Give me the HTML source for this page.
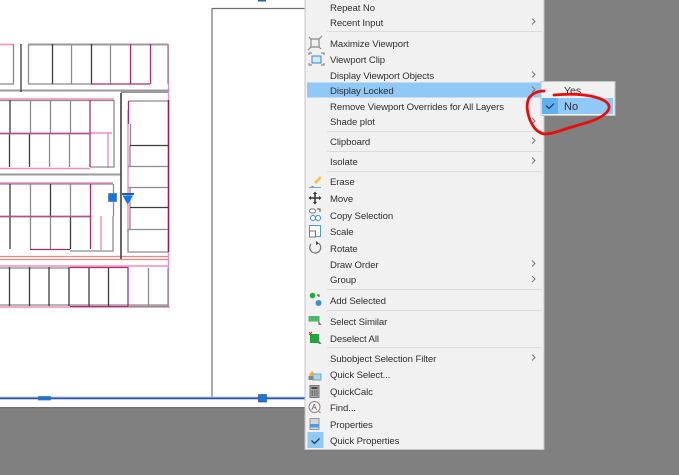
<!DOCTYPE html>
<html>
<head>
<meta charset="utf-8">
<style>
html,body{margin:0;padding:0;width:679px;height:475px;overflow:hidden;background:#808080;font-family:"Liberation Sans",sans-serif}
#c{position:absolute;left:0;top:0;width:679px;height:475px;overflow:hidden}
svg{position:absolute;left:0;top:0}
.t{position:absolute;left:330px;margin-top:1.500px;font-size:9.600px;line-height:12px;color:#303030;white-space:nowrap;letter-spacing:-.1px;filter:blur(.25px)}
</style>
</head>
<body>
<div id="c">
<svg width="679" height="475" viewBox="0 0 679 475" style="filter:blur(.35px)">
<rect x="0" y="0" width="310" height="407" fill="#fff"/>
<rect x="0" y="407" width="310" height="1.500" fill="#6f6f6f"/>
<!-- viewport -->
<path d="M212 398V8.500H306" fill="none" stroke="#707070" stroke-width="1.200"/>
<rect x="258" y="0" width="8" height="1.500" fill="#2a66b0"/>
<rect x="0" y="396.500" width="306" height="3.500" fill="#b9d0ef"/>
<rect x="0" y="397.500" width="306" height="1.500" fill="#2f4f9f"/>
<rect x="38.500" y="396.500" width="12" height="3.500" fill="#0a78e8" stroke="#4a6a9a" stroke-width=".7"/>
<rect x="258.500" y="394.500" width="8" height="7.500" fill="#0a78f0" stroke="#555" stroke-width=".7"/>
<!-- pink -->
<g fill="none" stroke="#f58ac0" stroke-width="1.400">
<path d="M0 44.500H14M0 99H114M0 183H113M90 133H112M0 168.500H90M168.500 44V307M0 307H170M128 110V232M0 266H168M101 216V250M108 133V168"/>
</g>
<g fill="none" stroke="#f4847f" stroke-width="1.200">
<path d="M0 256.500H168M0 259.500H168"/>
</g>
<!-- grey -->
<g fill="none" stroke="#8c8c8c" stroke-width="1.300">
<path d="M0 84H13.500V44M28.500 44V84H52M52 84H91"/>
<path d="M71.500 45V84M110.500 45V84M168 45V84"/>
<path d="M30.500 100V133M50.500 100V133M70.500 100V133M49.500 133V167M69.500 133V167M0 100.500H114V133M114 133V167H90"/>
<path d="M128.500 101H168M130.500 124V145M130 145V166M128 166.500H168"/>
<path d="M0 184H113M30.500 184V216M70.500 184V216M50.500 216V249M30.500 216V249M113.500 184V216M113 216V251H70"/>
<path d="M128 187.500H168M130 187V229M128 229.500H168M128 229V252H168"/>
<path d="M0 268H70M148.500 268V306M168 268V307M0 305H168M128 306.500H168"/>
</g>
<g fill="none" stroke="#9a9a9a" stroke-width="2">
<path d="M28 44.500H168M0 90.500H169M121 92H168M0 174.500H121"/>
</g>
<!-- dark -->
<g fill="none" stroke="#3c3c3c" stroke-width="1.300">
<path d="M21 44V92M52.500 44V84M91.500 44V84M10 100V133M9.500 133V167M29.500 133V167M10 184V216M50.500 184V216M10 216V249M70.500 216V249"/>
<path d="M130 145.500H168M130 207.500H168M9.500 267V306M29.500 267V306M49 267V306M69 267V306M89 267V306M108.500 267V306"/>
</g>
<path d="M121 93V259" fill="none" stroke="#555" stroke-width="1.800"/>
<!-- purple -->
<g fill="none" stroke="#b02a70" stroke-width="1.300">
<path d="M91 84H150M130.500 44V84M150.500 44V84M90 100V133M90 133V167M90.500 184V216M90.500 216V249M128.500 101V124M128 267V306M70 306.500H128M70 267.500H128M30 249.500H70"/>
</g>
<path d="M0 133.500H90M0 216.500H90" fill="none" stroke="#b4508a" stroke-width="1.800"/>
<path d="M168.500 100V252" fill="none" stroke="#9a1560" stroke-width="1.500"/>
<!-- handles -->
<rect x="108.500" y="193.500" width="8" height="8" fill="#0a78e8" stroke="#6b7a90" stroke-width=".8"/>
<rect x="122" y="193" width="12" height="2" fill="#2a5f9f"/>
<path d="M122.500 195.500H133L127.700 204.500Z" fill="#0a78f0"/>
<!-- menu -->
<rect x="305" y="-1" width="239" height="450.500" fill="#f1f1f1" stroke="#c4c4c4" stroke-width="1"/>
<rect x="307" y="82.500" width="236" height="15" fill="#90c8f6"/>
<g stroke="#dcdcdc" stroke-width="1">
<path d="M327 31.500H542M327 131.500H542M327 151.500H542M327 171.500H542M327 289.500H542M327 310.500H542M327 347.500H542"/>
</g>
<g fill="none" stroke="#777" stroke-width="1">
<path d="M532 18.500l3 3l-3 3M532 71.500l3 3l-3 3M532 86.500l3 3l-3 3M532 118l3 3l-3 3M532 137.500l3 3l-3 3M532 157.500l3 3l-3 3M532 260.500l3 3l-3 3M532 276l3 3l-3 3M532 354.500l3 3l-3 3"/>
</g>
<!-- submenu -->
<rect x="541" y="81.500" width="74" height="34" fill="#f1f1f1" stroke="#c4c4c4"/>
<rect x="542" y="98" width="71" height="16" fill="#90c8f6"/>
<rect x="542" y="98" width="16" height="16" fill="#5fb0f0"/>
<path d="M546 105.500l3 3l5-5" fill="none" stroke="#2b3a4d" stroke-width="1.200"/>
<!-- icons -->
<g fill="none" stroke="#8a8a8a" stroke-width="1.200">
<path d="M311 39H319V47H311Z"/>
<path d="M319 39l3-3M308 50l3-3M311 39l-2-2M319 47l2 2"/>
</g>
<path d="M312 56H321V63H312Z" fill="#d5e9fb" stroke="#2f88d8"/>
<path d="M309 55v-2h3M321 53h3v2M309 63v2h3M324 63v2h-3" fill="none" stroke="#777"/>
<path d="M314 182l6-6l1.500 2l-5 6z" fill="#f6c34f"/>
<path d="M310 187l3-1l1 1z" fill="#e23a2a"/>
<path d="M309 187.500H321" stroke="#6aaee8"/>
<path d="M315 193V203M310 198H320" stroke="#333" stroke-width="1.500"/>
<path d="M315 191.500l-2 2.500h4zM315 204.500l-2-2.500h4zM308.500 198l2.500-2v4zM321.500 198l-2.500-2v4z" fill="#333"/>
<rect x="309.500" y="209" width="6" height="4" rx="2" fill="#fff" stroke="#777"/>
<circle cx="313" cy="218" r="2.500" fill="#fff" stroke="#3388d8"/>
<circle cx="318" cy="218" r="2.500" fill="#fff" stroke="#3388d8"/>
<path d="M317 209h3v3" fill="none" stroke="#555"/>
<rect x="309.500" y="225.500" width="11" height="11" fill="#fff" stroke="#4a9be0"/>
<rect x="309.500" y="231" width="6" height="6" fill="#fff" stroke="#777"/>
<path d="M319 243.500A5.500 5.500 0 1 1 311 244" fill="none" stroke="#777" stroke-width="1.200"/>
<path d="M316 241l3 2.500l-3 1.500z" fill="#444"/>
<circle cx="312.500" cy="295.500" r="2.800" fill="#1cae3a"/>
<circle cx="318.500" cy="303" r="3" fill="#3a8fd8"/>
<path d="M317 295h2v2" fill="none" stroke="#333"/>
<rect x="308.500" y="316" width="11" height="5.500" fill="#4cb86c"/>
<path d="M318 320l3.500 5l-3 0z" fill="#777"/>
<rect x="310" y="334" width="9" height="9" fill="#1ca63a"/>
<path d="M309 332l3 3M312 332l-3 3" stroke="#e03030"/>
<path d="M318 339l3.500 5l-3 0z" fill="#777"/>
<rect x="313" y="374" width="8" height="6" fill="#a8d4f6" stroke="#7aa"/>
<path d="M309 375l3-4l2 2l-2 4z" fill="#f0b428"/>
<rect x="308.500" y="376" width="5" height="4" fill="#7a8a8a"/>
<rect x="310" y="385.500" width="9" height="12" fill="#a9a9a9" stroke="#777"/>
<rect x="311.500" y="387" width="6" height="2" fill="#444"/>
<path d="M311.500 391h6M311.500 393h6M311.500 395h6" stroke="#444" stroke-dasharray="1.500 .8" stroke-width="1"/>
<circle cx="314.500" cy="407" r="5.500" fill="#f6f6f6" stroke="#888"/>
<text x="311.500" y="410" font-size="8" fill="#555" font-family="Liberation Sans">A</text>
<path d="M318.500 411l2 2" stroke="#c9a040" stroke-width="1.300"/>
<rect x="310" y="418.500" width="9" height="11" fill="#d5d5d5" stroke="#999"/>
<rect x="310" y="424" width="9" height="3.500" fill="#4a9be0"/>
<rect x="307.500" y="432" width="16" height="16" fill="#90c8f6"/>
<path d="M311.500 440.500l3 3l5-5" fill="none" stroke="#2b3a4d" stroke-width="1.300"/>
</svg>
<div class="t" style="top:1px">Repeat No</div>
<div class="t" style="top:16px">Recent Input</div>
<div class="t" style="top:37px">Maximize Viewport</div>
<div class="t" style="top:53px">Viewport Clip</div>
<div class="t" style="top:69px">Display Viewport Objects</div>
<div class="t" style="top:84px">Display Locked</div>
<div class="t" style="top:100px">Remove Viewport Overrides for All Layers</div>
<div class="t" style="top:115px">Shade plot</div>
<div class="t" style="top:135px">Clipboard</div>
<div class="t" style="top:155px">Isolate</div>
<div class="t" style="top:175px">Erase</div>
<div class="t" style="top:192px">Move</div>
<div class="t" style="top:209px">Copy Selection</div>
<div class="t" style="top:225px">Scale</div>
<div class="t" style="top:242px">Rotate</div>
<div class="t" style="top:258px">Draw Order</div>
<div class="t" style="top:273px">Group</div>
<div class="t" style="top:294px">Add Selected</div>
<div class="t" style="top:315px">Select Similar</div>
<div class="t" style="top:332px">Deselect All</div>
<div class="t" style="top:352px">Subobject Selection Filter</div>
<div class="t" style="top:368px">Quick Select...</div>
<div class="t" style="top:385px">QuickCalc</div>
<div class="t" style="top:401px">Find...</div>
<div class="t" style="top:418px">Properties</div>
<div class="t" style="top:434px">Quick Properties</div>
<div class="t" style="left:564px;top:85px;margin-top:0;font-size:10.500px;letter-spacing:0">Yes</div>
<div class="t" style="left:564px;top:101px;margin-top:0;font-size:11px;letter-spacing:0">No</div>
<svg width="679" height="475" viewBox="0 0 679 475">
<path d="M544 91C537 91 532 94 529 98C526 104 527 112 530 120C533 127 537 133 545 134C553 134 561 130 572 127C585 123 600 120 607 112C611 107 609 103 603 100C593 95 575 93 554 95" fill="none" stroke="#ee0a0a" stroke-width="2.800" stroke-linecap="round"/>
</svg>
</div>
</body>
</html>
